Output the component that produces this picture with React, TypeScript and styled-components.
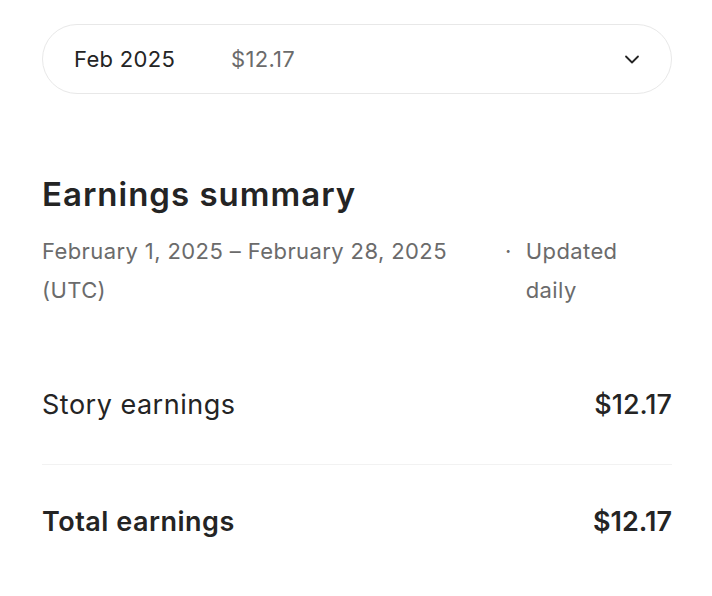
import React from "react";
import styled, {createGlobalStyle} from "styled-components";

const GlobalStyle = createGlobalStyle`
	body {
		margin: 0;
		background: #ffffff;
		font-family: Inter, "Liberation Sans", sans-serif;
		color: #242424;
	}
`;

const Page = styled.div`
	width: 630px;
	padding: 24px 40px 0 42px;
`;

const MonthPicker = styled.div`
	display: flex;
	align-items: center;
	height: 68px;
	border: 1px solid #e8e8e8;
	border-radius: 35px;
	padding: 0 29px 0 31px;
	font-size: 22px;
	letter-spacing: 0.3px;
`;

const Month = styled.span`
	color: #242424;
	width: 157px;
`;

const MonthAmount = styled.span`
	color: #6b6b6b;
	flex: 1;
`;

const Heading = styled.h2`
	margin: 78px 0 0;
	font-size: 33px;
	font-weight: 600;
	letter-spacing: 1px;
	line-height: 44px;
`;

const Meta = styled.div`
	display: flex;
	margin-top: 16px;
	font-size: 22px;
	line-height: 39px;
	color: #6b6b6b;
	letter-spacing: 0.4px;
`;

const Range = styled.div`
	width: 463px;
`;

const Updated = styled.div`
	display: flex;
	gap: 14px;
	width: 130px;
`;

const Rows = styled.div`
	margin-top: 78px;
`;

const Row = styled.div<{total?: boolean}>`
	display: flex;
	justify-content: space-between;
	align-items: center;
	padding: ${({total}) => (total ? "40px 0" : "0 0 43px")};
	font-size: 27px;
	letter-spacing: 0.5px;
	font-weight: ${({total}) => (total ? 600 : 400)};
	border-bottom: ${({total}) => (total ? "none" : "1px solid #f2f2f2")};
`;

const Amount = styled.span<{strong?: boolean}>`
	font-weight: ${({strong}) => (strong ? 600 : 500)};
	letter-spacing: 0;
`;

const Chevron = () => (
	<svg width="20" height="20" viewBox="0 0 20 20" fill="none">
		<path d="M4 7.5l6 6 6-6" stroke="#242424" strokeWidth="1.8" strokeLinecap="round" strokeLinejoin="round" />
	</svg>
);

export default function App() {
	return (
		<Page>
			<GlobalStyle />
			<MonthPicker>
				<Month>Feb 2025</Month>
				<MonthAmount>$12.17</MonthAmount>
				<Chevron />
			</MonthPicker>
			<Heading>Earnings summary</Heading>
			<Meta>
				<Range>February 1, 2025 – February 28, 2025 (UTC)</Range>
				<Updated>
					<span>·</span>
					<span>Updated daily</span>
				</Updated>
			</Meta>
			<Rows>
				<Row>
					<span>Story earnings</span>
					<Amount>$12.17</Amount>
				</Row>
				<Row total>
					<span>Total earnings</span>
					<Amount strong>$12.17</Amount>
				</Row>
			</Rows>
		</Page>
	);
}
